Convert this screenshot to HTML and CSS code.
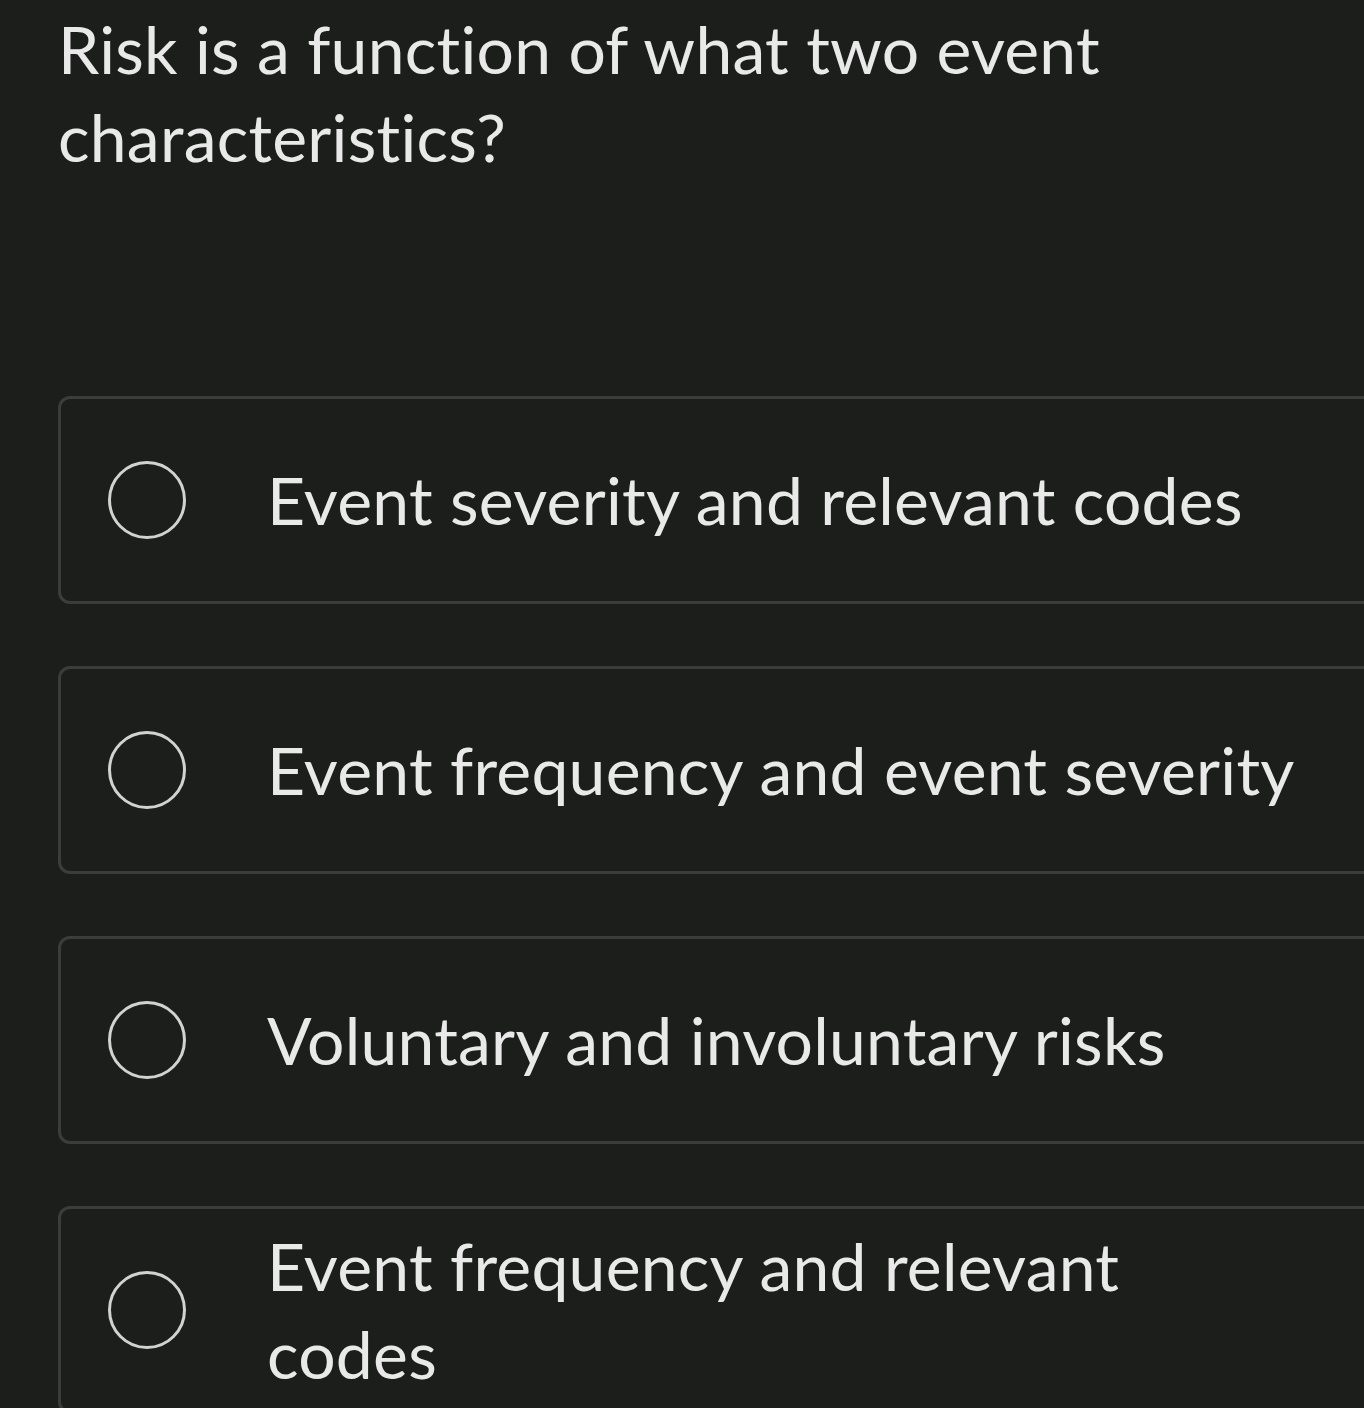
FILE: index.html
```html
<!DOCTYPE html>
<html lang="en">
<head>
<meta charset="utf-8">
<title>Quiz question</title>
<link rel="stylesheet" href="styles.css">
</head>
<body>
<main class="quiz">
  <h1 class="question">Risk is a function of what two event characteristics?</h1>
  <ul class="options">
    <li class="option"><span class="radio"></span><span class="label">Event severity and relevant codes</span></li>
    <li class="option"><span class="radio"></span><span class="label">Event frequency and event severity</span></li>
    <li class="option"><span class="radio"></span><span class="label">Voluntary and involuntary risks</span></li>
    <li class="option"><span class="radio"></span><span class="label">Event frequency and relevant codes</span></li>
  </ul>
</main>
</body>
</html>
```

FILE: styles.css
```css
html, body {
  margin: 0;
  padding: 0;
  background: #1c1e1c;
  overflow: hidden;
}

.quiz {
  padding: 5px 0 0 58px;
  font-family: Lato, "Noto Sans", sans-serif;
  font-variant-ligatures: none;
  letter-spacing: 0.25px;
  color: #e9e9e9;
}

.question {
  margin: 0;
  width: 1100px;
  font-size: 66px;
  font-weight: 400;
  line-height: 88px;
}

.options {
  list-style: none;
  margin: 215px -60px 0 0;
  padding: 0;
  display: flex;
  flex-direction: column;
  gap: 62px;
}

.option {
  display: flex;
  align-items: center;
  gap: 81px;
  min-height: 208px;
  box-sizing: border-box;
  padding: 12px 40px 12px 47px;
  border: 3px solid #3b3d3b;
  border-radius: 12px;
}

.radio {
  flex: none;
  width: 78px;
  height: 78px;
  box-sizing: border-box;
  border: 3px solid #d2d2d2;
  border-radius: 50%;
}

.label {
  font-size: 66px;
  line-height: 88px;
  max-width: 1030px;
}
```
